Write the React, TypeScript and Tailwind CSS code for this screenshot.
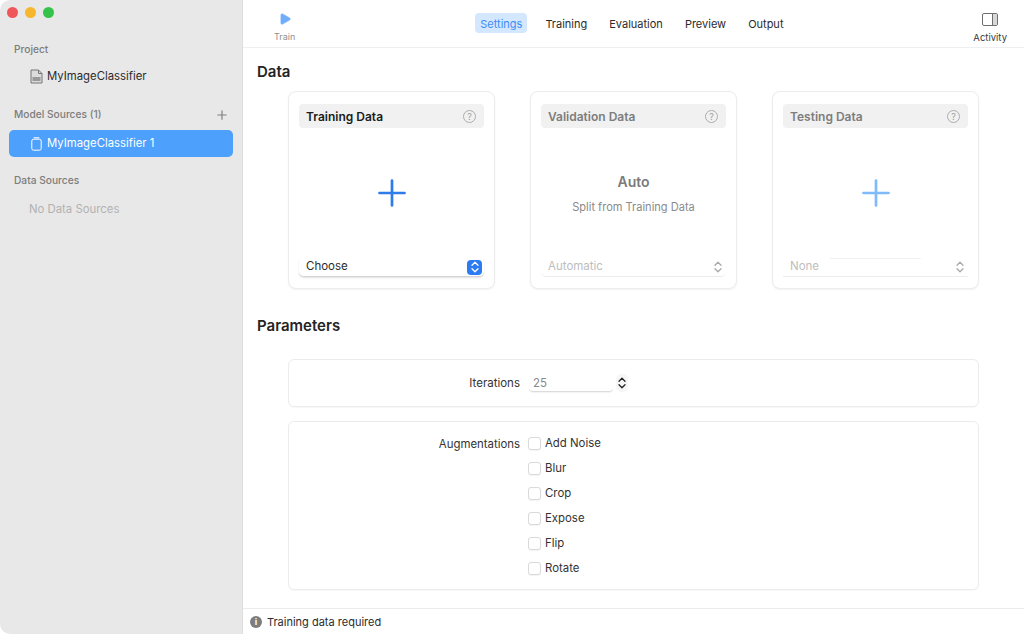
import { Play } from 'lucide-react';

const tabs = ['Settings', 'Training', 'Evaluation', 'Preview', 'Output'];
const augmentations = ['Add Noise', 'Blur', 'Crop', 'Expose', 'Flip', 'Rotate'];

function Updown({ className }: { className: string }) {
  return (
    <svg width="8" height="12" viewBox="0 0 8 12" fill="none" stroke="currentColor" strokeWidth="1.3" strokeLinecap="round" strokeLinejoin="round" className={className}>
      <path d="M1 4.2 4 1.2l3 3" />
      <path d="M1 7.8l3 3 3-3" />
    </svg>
  );
}

function PlusSign({ className }: { className: string }) {
  return (
    <svg width="28" height="28" viewBox="0 0 28 28" fill="none" stroke="currentColor" strokeWidth="2.7" strokeLinecap="round" className={className}>
      <path d="M14 1.5v25M1.5 14h25" />
    </svg>
  );
}

function Help() {
  return (
    <span className="w-[13px] h-[13px] rounded-full border border-[#adadad] text-[#a0a0a0] text-[9px] leading-[11px] text-center">?</span>
  );
}

function DataCard({ title, active, children, footer }: { title: string; active?: boolean; children: React.ReactNode; footer: React.ReactNode }) {
  return (
    <div className="w-[207px] h-[198px] rounded-[8px] border border-[#ececec] shadow-[0_1px_2px_rgba(0,0,0,0.05)] bg-white px-[10px] pt-[12px] pb-[12px] flex flex-col">
      <div className="h-[24px] rounded-[4px] bg-[#f1f1f1] pl-[7px] pr-[8px] flex items-center justify-between">
        <span className={`text-[12px] font-semibold pt-[1px] ${active ? 'text-[#1c1c1c]' : 'text-[#7d7d7d]'}`}>{title}</span>
        <Help />
      </div>
      <div className="flex-1 flex flex-col items-center justify-center pt-[2px]">{children}</div>
      {footer}
    </div>
  );
}

export default function App() {
  return (
    <div className="w-[1024px] h-[634px] flex bg-white overflow-hidden text-[#2a2a2a] font-['Inter','Liberation_Sans',sans-serif]">
      <aside className="w-[243px] shrink-0 bg-[#e8e8e8] rounded-l-[10px] border-r border-[#dedede]">
        <div className="flex gap-[7px] pl-[7px] pt-[7px]">
          <span className="w-[11px] h-[11px] rounded-full bg-[#f0555a]" />
          <span className="w-[11px] h-[11px] rounded-full bg-[#f6b62e]" />
          <span className="w-[11px] h-[11px] rounded-full bg-[#35c24a]" />
        </div>
        <div className="pl-[14px] mt-[24px] text-[10.2px] font-medium leading-[14px] text-[#7c7c7c]">Project</div>
        <div className="flex items-center gap-[4px] pl-[30px] mt-[12px] h-[16px]">
          <svg width="13" height="15" viewBox="0 0 13 15" fill="none" className="shrink-0">
            <path d="M1 1h7.5L12 4.5V14H1z" fill="#dcdcdc" stroke="#777" strokeWidth="1" strokeLinejoin="round" />
            <path d="M8.5 1v3.5H12" stroke="#777" strokeWidth="1" />
            <rect x="2.5" y="8" width="8" height="4" fill="#999" />
          </svg>
          <span className="text-[11.35px] leading-[16px] text-[#2b2b2b]">MyImageClassifier</span>
        </div>
        <div className="flex items-center justify-between pl-[14px] pr-[15px] mt-[24px] h-[14px]">
          <span className="text-[10.2px] font-medium text-[#7c7c7c]">Model Sources (1)</span>
          <svg width="10" height="10" viewBox="0 0 10 10" stroke="#808080" strokeWidth="1.2" strokeLinecap="round">
            <path d="M5 .8v8.4M.8 5h8.4" />
          </svg>
        </div>
        <div className="mx-[9px] mt-[8px] h-[27px] rounded-[5px] bg-[#4da0fb] flex items-center pl-[22px] gap-[5px]">
          <svg width="11" height="14" viewBox="0 0 11 14" fill="none" stroke="#fff" strokeWidth="1" className="shrink-0">
            <rect x="0.8" y="2.2" width="9.4" height="11" rx="1.8" />
            <path d="M3 .8h5" strokeLinecap="round" />
          </svg>
          <span className="text-[11.35px] text-white">MyImageClassifier 1</span>
        </div>
        <div className="pl-[14px] mt-[16px] text-[10.2px] font-medium leading-[14px] text-[#7c7c7c]">Data Sources</div>
        <div className="pl-[29px] mt-[14px] text-[11.35px] leading-[16px] text-[#b2b2b2]">No Data Sources</div>
      </aside>

      <main className="flex-1 flex flex-col min-w-0">
        <header className="h-[48px] shrink-0 border-b border-[#efefef] flex items-start pl-[31px] pr-[16px]">
          <div className="flex flex-col items-center pt-[12px]">
            <Play size={14} className="text-[#70aefc] fill-[#70aefc]" strokeWidth={1} />
            <span className="text-[9px] leading-[12px] mt-[5px] text-[#8f8f8f]">Train</span>
          </div>
          <nav className="flex items-center gap-[22px] pt-[13px] ml-[180px]">
            {tabs.map((t, i) => (
              <span key={t} className={`h-[20px] leading-[22px] text-[11px] rounded-[4px] ${i === 0 ? 'bg-[#d3e7fe] text-[#3d8df5] px-[5px] -mr-[4px]' : 'text-[#2b2b2b]'}`}>{t}</span>
            ))}
          </nav>
          <div className="flex flex-col items-center pt-[13px] ml-auto mr-[1px]">
            <svg width="16" height="13" viewBox="0 0 16 13" fill="none" stroke="#6f6f6f" strokeWidth="1">
              <rect x="0.5" y="0.5" width="15" height="12" rx="1.5" />
              <path d="M10.5 0.5v12" />
              <rect x="11" y="1" width="4" height="11" fill="#d8d8d8" stroke="none" />
            </svg>
            <span className="text-[9.5px] leading-[12px] mt-[6px] text-[#3a3a3a]">Activity</span>
          </div>
        </header>

        <div className="flex-1 min-h-0 pl-[14px] pr-[45px]">
          <h2 className="text-[15px] font-semibold leading-[20px] mt-[14px] text-[#242424]">Data</h2>
          <div className="ml-[31px] mt-[9px] flex justify-between">
            <DataCard
              title="Training Data"
              active
              footer={
                <div className="h-[19px] rounded-[5px] border-b border-[#d4d4d4] shadow-[0_1px_2px_rgba(0,0,0,0.12)] bg-white flex items-center justify-between pl-[7px] pr-[2px] translate-y-[1px]">
                  <span className="text-[11.5px] text-[#2b2b2b]">Choose</span>
                  <span className="w-[15px] h-[15px] rounded-[4px] bg-[#2b7cf2] flex items-center justify-center">
                    <Updown className="text-white" />
                  </span>
                </div>
              }
            >
              <PlusSign className="text-[#2f7bea] mb-[1px]" />
            </DataCard>
            <DataCard
              title="Validation Data"
              footer={
                <div className="h-[19px] rounded-[5px] border-b border-[#ececec] flex items-center justify-between pl-[7px] pr-[4px] translate-y-[1px]">
                  <span className="text-[11.5px] text-[#bdbdbd]">Automatic</span>
                  <Updown className="text-[#a8a8a8]" />
                </div>
              }
            >
              <span className="text-[14px] font-semibold leading-[18px] text-[#7b7b7b] mb-[8px]">Auto</span>
              <span className="text-[11.05px] leading-[16px] text-[#8a8a8a]">Split from Training Data</span>
            </DataCard>
            <DataCard
              title="Testing Data"
              footer={
                <div className="translate-y-[1px]">
                  <div className="h-px bg-[#f1f1f1] mx-[47px]" />
                  <div className="h-[18px] border-b border-[#ececec] flex items-center justify-between pl-[7px] pr-[4px] pb-[2px]">
                    <span className="text-[11.5px] text-[#bdbdbd]">None</span>
                    <Updown className="text-[#a8a8a8]" />
                  </div>
                </div>
              }
            >
              <PlusSign className="text-[#7fbafa] mb-[1px]" />
            </DataCard>
          </div>

          <h2 className="text-[15px] font-semibold leading-[20px] mt-[27px] text-[#242424]">Parameters</h2>
          <div className="ml-[31px] mt-[23px] h-[48px] rounded-[6px] border border-[#ececec] shadow-[0_1px_1px_rgba(0,0,0,0.03)] flex items-center">
            <span className="w-[231px] text-right text-[11.5px] text-[#333] pt-[2px]">Iterations</span>
            <div className="ml-[9px] w-[84px] h-[18px] border-b border-[#dcdcdc] rounded-[4px] shadow-[0_1px_1px_rgba(0,0,0,0.05)] pl-[4px] text-[11.5px] leading-[18px] text-[#8a8a8a]">25</div>
            <div className="ml-[3px] w-[12px] h-[18px] rounded-[5px] bg-[#f6f6f6] flex items-center justify-center">
              <Updown className="text-[#222]" />
            </div>
          </div>
          <div className="ml-[31px] mt-[14px] h-[169px] rounded-[6px] border border-[#ececec] shadow-[0_1px_1px_rgba(0,0,0,0.03)] flex items-start pt-[12px]">
            <span className="w-[231px] text-right text-[11.4px] leading-[18px] text-[#333] pt-[1px]">Augmentations</span>
            <div className="ml-[8px] flex flex-col gap-[7px]">
              {augmentations.map(a => (
                <label key={a} className="h-[18px] flex items-center gap-[4px]">
                  <span className="w-[13px] h-[13px] rounded-[3px] border border-[#dadada] bg-white shadow-[0_1px_1px_rgba(0,0,0,0.05)]" />
                  <span className="text-[11.4px] text-[#333] pt-[2px]">{a}</span>
                </label>
              ))}
            </div>
          </div>
        </div>

        <footer className="h-[26px] shrink-0 border-t border-[#ececec] flex items-center pl-[7px] pt-[1px] gap-[5px]">
          <span className="w-[12px] h-[12px] rounded-full bg-[#7d7d7d] text-white text-[9px] font-bold leading-[12px] text-center">i</span>
          <span className="text-[11px] text-[#2b2b2b]">Training data required</span>
        </footer>
      </main>
    </div>
  );
}
